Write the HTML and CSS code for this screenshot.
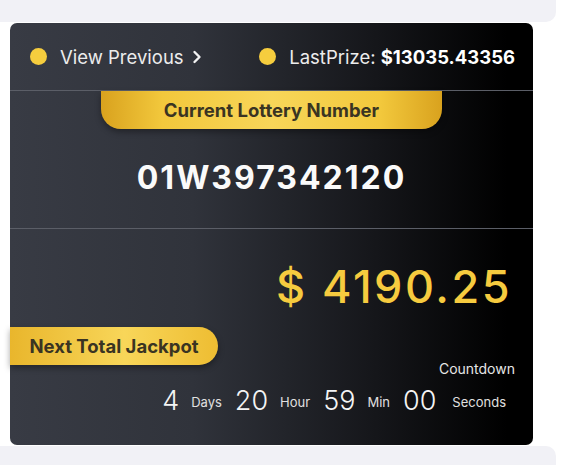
FILE: index.html
```html
<!DOCTYPE html>
<html lang="en">

<head>
    <link rel="stylesheet" href="styles.css">
    <meta charset="UTF-8">
    <meta name="viewport" content="width=device-width, initial-scale=1.0">
</head>

<body>
    <div class="top-band"></div>
    <div class="sheet">
        <div class="lottery-card">
            <div class="card-head">
                <div class="head-item">
                    <span class="dot"></span>
                    <span class="head-text">View Previous</span>
                    <svg class="chevron" width="10" height="14" viewBox="0 0 10 14">
                        <path d="M2.5 2 L7.5 7 L2.5 12" fill="none" stroke="#f2f2f2" stroke-width="2.4" stroke-linecap="round" stroke-linejoin="round"/>
                    </svg>
                </div>
                <div class="head-item">
                    <span class="dot"></span>
                    <span class="head-text">LastPrize: <b>$13035.43356</b></span>
                </div>
            </div>

            <div class="current">
                <div class="pill pill-top">Current Lottery Number</div>
                <div class="lottery-number">01W397342120</div>
            </div>

            <div class="jackpot">
                <div class="amount">$ 4190.25</div>
                <div class="pill pill-left">Next Total Jackpot</div>
                <div class="countdown-label">Countdown</div>
                <div class="countdown">
                    <span class="big">4</span><span class="unit">Days</span>
                    <span class="big">20</span><span class="unit">Hour</span>
                    <span class="big">59</span><span class="unit">Min</span>
                    <span class="big">00</span><span class="unit">Seconds</span>
                </div>
            </div>
        </div>
    </div>
    <div class="bottom-band"></div>
</body>

</html>
```

FILE: styles.css
```css
body {
    margin: 0;
    background: #fff;
    font-family: Inter, "Noto Sans", sans-serif;
}

.top-band {
    width: 556px;
    height: 22px;
    background: #f1f1f6;
    border-bottom-right-radius: 10px;
}

.sheet {
    padding: 1px 0 1px 10px;
}

.bottom-band {
    width: 556px;
    height: 20px;
    background: #f1f1f6;
    border-top-right-radius: 10px;
}

.lottery-card {
    width: 523px;
    height: 422px;
    border-radius: 7px;
    background: linear-gradient(to right, #383b44 0%, #30333b 35%, #15161a 70%, #000 95%);
    display: flex;
    flex-direction: column;
    color: #f2f2f2;
}

.card-head {
    height: 67px;
    border-bottom: 1px solid #5b5e67;
    display: flex;
    align-items: center;
    justify-content: space-between;
    padding: 0 18px 0 20px;
}

.head-item {
    display: flex;
    align-items: center;
}

.dot {
    width: 17px;
    height: 17px;
    border-radius: 50%;
    background: #f6cd3e;
    margin-right: 13px;
}

.head-text {
    font-size: 18.5px;
    color: #ececec;
}

.head-text b {
    font-weight: 700;
    color: #fff;
}

.chevron {
    margin-left: 8px;
}

.pill {
    background: linear-gradient(to right, #d9a21e 0%, #f2c83c 18%, #f8d659 50%, #f2c83c 82%, #d9a21e 100%);
    color: #3a3422;
    font-weight: 700;
    font-size: 18.5px;
    height: 38px;
    display: flex;
    align-items: center;
    justify-content: center;
    box-shadow: 0 3px 6px rgba(0, 0, 0, 0.35);
}

.current {
    height: 137px;
    border-bottom: 1px solid #5b5e67;
    display: flex;
    flex-direction: column;
    align-items: center;
}

.pill-top {
    width: 341px;
    border-radius: 0 0 20px 20px;
}

.lottery-number {
    margin-top: 29px;
    font-size: 32px;
    font-weight: 700;
    letter-spacing: 2px;
    color: #fafafa;
}

.jackpot {
    display: flex;
    flex-direction: column;
    flex: 1;
}

.amount {
    align-self: flex-end;
    margin: 32px 21px 0 0;
    font-size: 45px;
    font-weight: 500;
    letter-spacing: 2.5px;
    color: #f6cb3f;
    line-height: 52px;
}

.pill-left {
    width: 208px;
    margin-top: 14px;
    border-radius: 0 19px 19px 0;
    background: linear-gradient(to right, #e9b62c 0%, #f8d659 55%, #eebd32 100%);
}

.countdown-label {
    align-self: flex-end;
    margin: -5px 18px 0 0;
    font-size: 14px;
    color: #e6e6e6;
}

.countdown {
    align-self: flex-end;
    margin: 7px 27px 0 0;
    display: flex;
    align-items: center;
}

.big {
    font-size: 27px;
    font-weight: 300;
    color: #f4f4f4;
}

.unit {
    font-size: 13px;
    color: #e0e0e0;
    margin: 3px 13px 0 12px;
}

.unit:last-child {
    margin-right: 0;
    margin-left: 16px;
}
```
